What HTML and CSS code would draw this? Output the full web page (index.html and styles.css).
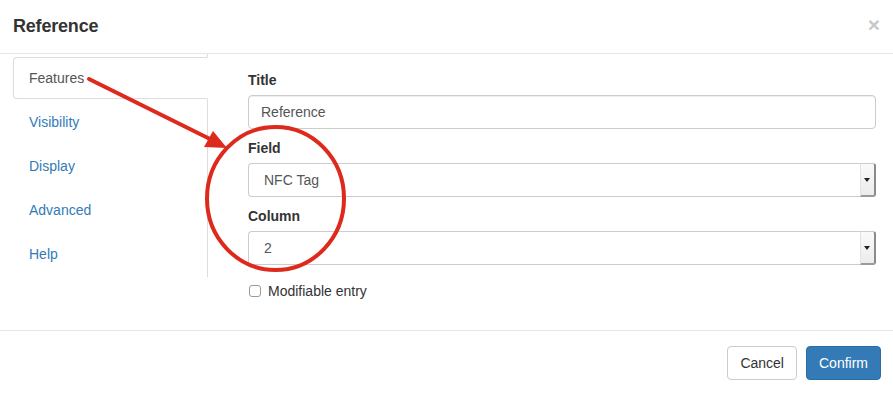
FILE: index.html
```html
<!DOCTYPE html>
<html>
<head>
<meta charset="utf-8">
<link rel="stylesheet" href="styles.css">
</head>
<body>
<div class="modal">
  <div class="modal-header">
    <h4 class="modal-title">Reference</h4>
    <span class="close">×</span>
  </div>
  <div class="modal-body">
    <div class="side">
      <ul class="nav">
        <li class="active"><a>Features</a></li>
        <li><a>Visibility</a></li>
        <li><a>Display</a></li>
        <li><a>Advanced</a></li>
        <li><a>Help</a></li>
      </ul>
    </div>
    <div class="content">
      <div class="group">
        <label class="lbl">Title</label>
        <div class="input">Reference</div>
      </div>
      <div class="group">
        <label class="lbl">Field</label>
        <div class="select"><span class="val">NFC Tag</span><span class="btn-arrow"><i class="tri"></i></span></div>
      </div>
      <div class="group">
        <label class="lbl">Column</label>
        <div class="select"><span class="val">2</span><span class="btn-arrow"><i class="tri"></i></span></div>
      </div>
      <div class="check"><span class="box"></span><span>Modifiable entry</span></div>
    </div>
  </div>
  <div class="modal-footer">
    <button class="btn btn-default">Cancel</button>
    <button class="btn btn-primary">Confirm</button>
  </div>
  <svg class="annot" width="893" height="394" viewBox="0 0 893 394">
    <line x1="89" y1="79" x2="212" y2="140" stroke="#dd2a1c" stroke-width="4" stroke-linecap="round"/>
    <polygon points="204,147 213,131 227,148" fill="#dd2a1c"/>
    <ellipse cx="275.5" cy="198.5" rx="68.5" ry="71.5" fill="none" stroke="#dd2a1c" stroke-width="4"/>
  </svg>
</div>
</body>
</html>
```

FILE: styles.css
```css
* { box-sizing: border-box; }
html, body { margin: 0; padding: 0; background: #fff; }
body {
  font-family: "Liberation Sans", Arial, sans-serif;
  font-size: 14px;
  line-height: 20px;
  color: #333;
}
.modal { position: relative; width: 893px; height: 394px; overflow: hidden; }
.modal-header {
  height: 54px;
  display: flex;
  align-items: center;
  justify-content: space-between;
  padding: 0 13px 1px 13px;
  border-bottom: 1px solid #e5e5e5;
}
.modal-title {
  margin: 0;
  font-size: 18px;
  font-weight: bold;
  line-height: 26px;
  color: #333;
  letter-spacing: -0.2px;
}
.close {
  font-size: 21px;
  font-weight: bold;
  color: #c8c8c8;
  line-height: 21px;
  margin-top: -3px;
}
.modal-body { display: flex; align-items: flex-start; }
.side {
  width: 208px;
  padding: 3px 0 0 13px;
  border-right: 1px solid #ddd;
}
.nav { list-style: none; margin: 0; padding: 0; }
.nav li { margin-bottom: 2px; }
.nav li a {
  display: block;
  padding: 10px 15px;
  border: 1px solid transparent;
  border-radius: 4px 0 0 4px;
  color: #337ab7;
  line-height: 20px;
}
.nav li.active a {
  color: #555;
  background: #fff;
  border-color: #ddd;
  border-right-color: transparent;
  margin-right: -1px;
}
.content {
  flex: 1;
  padding: 16px 17px 0 40px;
}
.group { margin-bottom: 9px; }
.lbl {
  display: block;
  font-weight: bold;
  margin-bottom: 5px;
  line-height: 20px;
}
.input {
  height: 34px;
  border: 1px solid #ccc;
  border-radius: 4px;
  padding: 6px 12px;
  color: #555;
  box-shadow: inset 0 1px 1px rgba(0,0,0,.075);
}
.select {
  height: 34px;
  display: flex;
  border: 1px solid #ccc;
  border-right: none;
  border-radius: 4px;
  color: #555;
}
.select .val { flex: 1; padding: 6px 15px; }
.btn-arrow {
  width: 16px;
  margin-top: -1px;
  margin-bottom: -1px;
  background: linear-gradient(#fafafa, #ececec);
  border-left: 1px solid #e3e3e3;
  border-right: 2px solid #8a8a8a;
  border-bottom: 2px solid #9a9a9a;
  border-top: 1px solid #ccc;
  border-radius: 0 3px 3px 0;
  display: flex;
  align-items: center;
  justify-content: center;
}
.tri {
  display: block;
  width: 0; height: 0;
  border-left: 3px solid transparent;
  border-right: 3px solid transparent;
  border-top: 4px solid #222;
  margin-left: -1px;
}
.check {
  margin-top: 16px;
  display: flex;
  align-items: center;
  line-height: 20px;
  padding-left: 1px;
}
.check .box {
  width: 12px; height: 12px;
  border: 1px solid #9a9a9a;
  border-radius: 3px;
  margin-right: 7px;
  background: #fff;
}
.modal-footer {
  position: absolute;
  left: 0; right: 0; top: 330px;
  border-top: 1px solid #e5e5e5;
  padding: 15px 12px 0 0;
  display: flex;
  justify-content: flex-end;
  gap: 9px;
}
.btn {
  font-family: inherit;
  font-size: 14px;
  line-height: 20px;
  height: 34px;
  padding: 6px 12px;
  border-radius: 4px;
  border: 1px solid #ccc;
  margin: 0;
}
.btn-default { background: #fff; color: #333; }
.btn-primary { background: #337ab7; border-color: #2e6da4; color: #fff; }
.annot { position: absolute; left: 0; top: 0; pointer-events: none; }
```
